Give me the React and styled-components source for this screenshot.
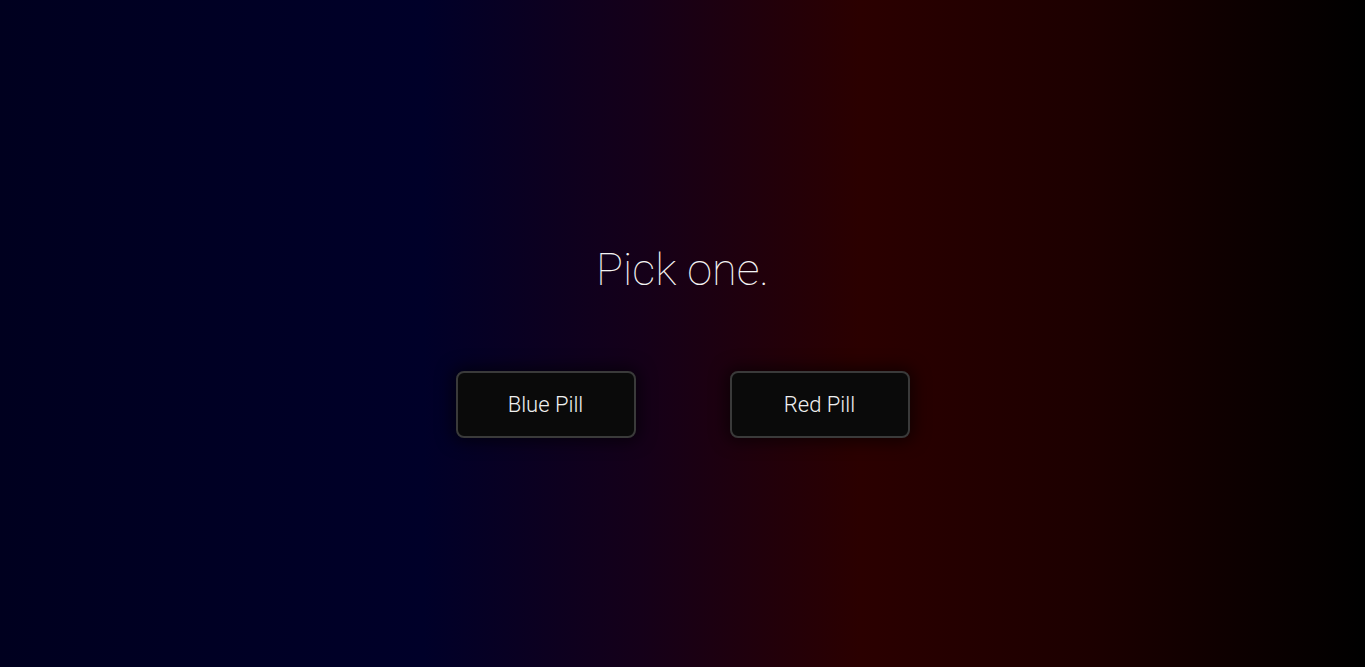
import React from "react";
import styled, { createGlobalStyle } from "styled-components";

const GlobalStyle = createGlobalStyle`
	html, body {
		margin: 0;
		padding: 0;
		height: 100%;
	}

	body {
		font-family: Roboto, "Liberation Sans", sans-serif;
		background: #000;
	}
`;

const Wrapper = styled.div`
	width: 100%;
	height: 100vh;
	box-sizing: border-box;
	padding-top: 14px;
	display: flex;
	flex-direction: column;
	align-items: center;
	justify-content: center;
	background: linear-gradient(
		to right,
		#00001f 0%,
		#000029 31%,
		#150019 47%,
		#2b0000 63%,
		#1c0000 80%,
		#000000 100%
	);
`;

const Title = styled.h1`
	margin: 0 0 75px;
	font-size: 45px;
	line-height: 53px;
	font-weight: 100;
	color: #f4f4f4;
`;

const ButtonRow = styled.div`
	display: flex;
	gap: 94px;
`;

const PillButton = styled.button`
	width: 180px;
	height: 67px;
	box-sizing: border-box;
	border: 2px solid #3a3a3a;
	border-radius: 8px;
	background: #0a0a0a;
	color: #f0f0f0;
	font-family: Roboto, "Liberation Sans", sans-serif;
	font-size: 22px;
	font-weight: 300;
	cursor: pointer;
	box-shadow: 0 0 16px 4px rgba(0, 0, 0, 0.55);
`;

function App() {
	return (
		<>
			<GlobalStyle />
			<Wrapper>
				<Title>Pick one.</Title>
				<ButtonRow>
					<PillButton>Blue Pill</PillButton>
					<PillButton>Red Pill</PillButton>
				</ButtonRow>
			</Wrapper>
		</>
	);
}

export default App;
